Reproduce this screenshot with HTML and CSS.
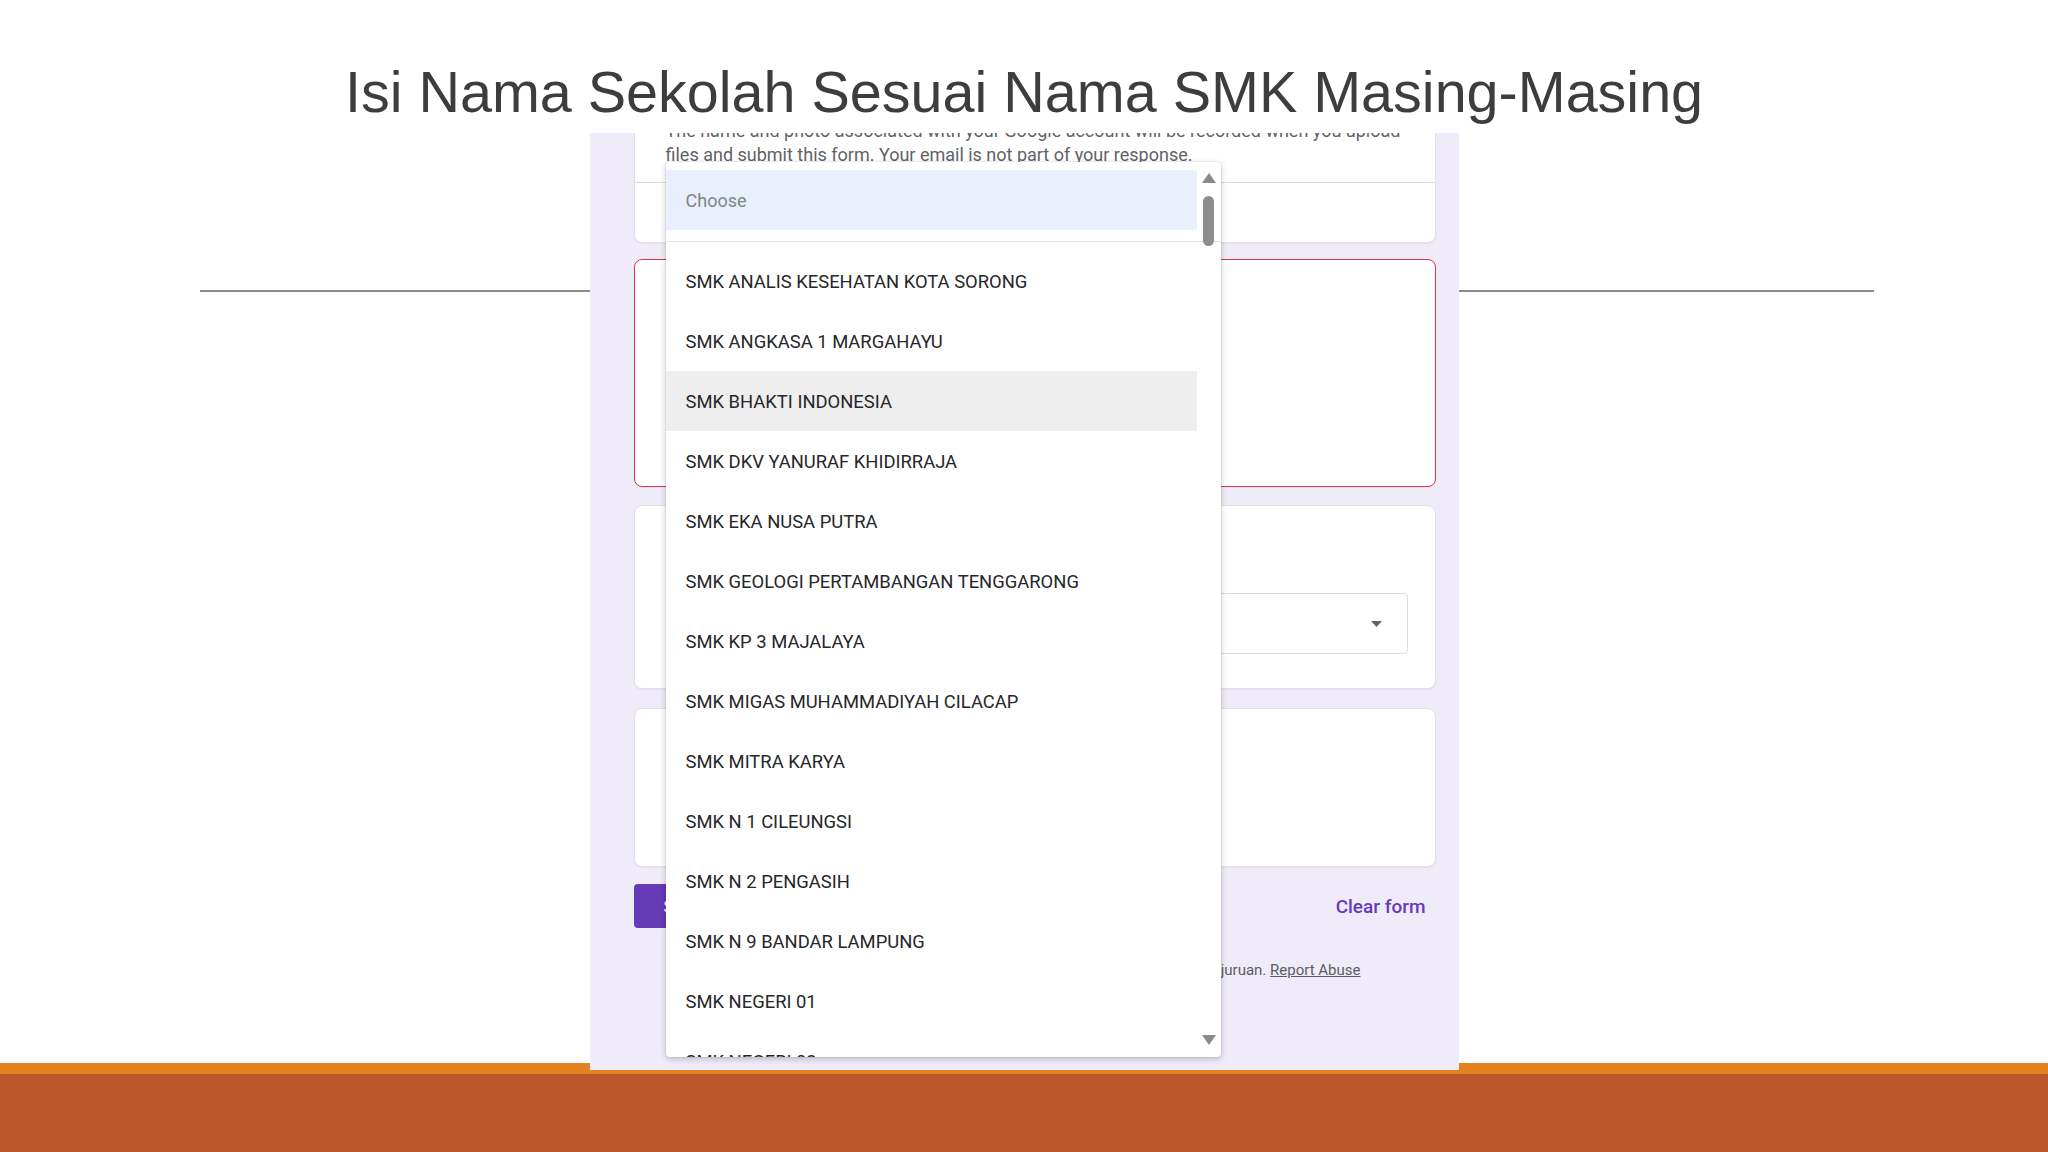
FILE: index.html
```html
<!DOCTYPE html>
<html lang="id">
<head>
<meta charset="utf-8">
<title>Isi Nama Sekolah Sesuai Nama SMK Masing-Masing</title>
<link rel="stylesheet" href="styles.css">
</head>
<body>
<div class="slide">
  <div class="rule"></div>
  <h1 class="title">Isi Nama Sekolah Sesuai Nama SMK Masing-Masing</h1>
  <div class="panel">
    <div class="cards">
      <div class="card card-intro">
        <p class="intro">The name and photo associated with your Google account will be recorded when you upload<br>files and submit this form. Your email is not part of your response.</p>
        <div class="divider"></div>
        <div class="required"></div>
      </div>
      <div class="card card-error"></div>
      <div class="card card-select">
        <div class="select">
          <svg class="select-arrow" width="11" height="6" viewBox="0 0 11 6"><path d="M0 0H11L5.5 6Z" fill="#5f6368"/></svg>
        </div>
      </div>
      <div class="card card-blank"></div>
      <div class="actions">
        <button class="submit">Submit</button>
        <span class="clear">Clear form</span>
      </div>
      <p class="footnote">This form was created inside of Sekolah Menengah Kejuruan. <a class="abuse">Report Abuse</a></p>
    </div>

    <div class="menu">
      <div class="menu-list">
        <div class="opt placeholder">Choose</div>
        <div class="menu-sep"></div>
        <div class="opt">SMK ANALIS KESEHATAN KOTA SORONG</div>
        <div class="opt">SMK ANGKASA 1 MARGAHAYU</div>
        <div class="opt hover">SMK BHAKTI INDONESIA</div>
        <div class="opt">SMK DKV YANURAF KHIDIRRAJA</div>
        <div class="opt">SMK EKA NUSA PUTRA</div>
        <div class="opt">SMK GEOLOGI PERTAMBANGAN TENGGARONG</div>
        <div class="opt">SMK KP 3 MAJALAYA</div>
        <div class="opt">SMK MIGAS MUHAMMADIYAH CILACAP</div>
        <div class="opt">SMK MITRA KARYA</div>
        <div class="opt">SMK N 1 CILEUNGSI</div>
        <div class="opt">SMK N 2 PENGASIH</div>
        <div class="opt">SMK N 9 BANDAR LAMPUNG</div>
        <div class="opt">SMK NEGERI 01</div>
        <div class="opt">SMK NEGERI 02</div>
      </div>
      <div class="scroll">
        <svg class="arrow arrow-up" width="14" height="10" viewBox="0 0 14 10"><path d="M7 0L14 10H0Z" fill="#8a8a8a"/></svg>
        <div class="thumb"></div>
        <div class="track"></div>
        <svg class="arrow arrow-down" width="14" height="10" viewBox="0 0 14 10"><path d="M0 0H14L7 10Z" fill="#8a8a8a"/></svg>
      </div>
    </div>
  </div>
  <div class="footer">
    <div class="stripe"></div>
    <div class="band"></div>
  </div>
</div>
</body>
</html>
```
FILE: styles.css
```css
* { box-sizing: border-box; }

html, body {
  margin: 0;
  padding: 0;
  background: #ffffff;
}

.slide {
  position: relative;
  width: 2048px;
  height: 1152px;
  overflow: hidden;
  display: flex;
  flex-direction: column;
  background: #ffffff;
}

.rule {
  position: absolute;
  left: 200px;
  top: 290px;
  width: 1674px;
  height: 2px;
  background: #8a8a8a;
  z-index: 0;
}

.title {
  margin: 57px 0 6px;
  height: 70px;
  line-height: 70px;
  font-family: "Liberation Sans", Arial, sans-serif;
  font-size: 57.5px;
  font-weight: normal;
  color: #3d3d3d;
  text-align: center;
  white-space: nowrap;
  position: relative;
  z-index: 1;
}

.panel {
  position: relative;
  z-index: 2;
  flex: none;
  width: 869px;
  height: 937px;
  margin: 0 auto;
  padding: 0 23px 0 44px;
  background: #f0ebf8;
  overflow: hidden;
  font-family: Roboto, "Liberation Sans", Arial, sans-serif;
}

.cards {
  margin-top: -30px;
  display: flex;
  flex-direction: column;
}

.card {
  background: #ffffff;
  border: 1px solid #e2dfe8;
  border-radius: 8px;
  box-shadow: 0 1px 2px rgba(60, 40, 100, 0.06);
}

.card-intro {
  height: 140px;
  padding-top: 15px;
}

.intro {
  margin: 0;
  padding: 0 31px;
  font-size: 18px;
  line-height: 24px;
  color: #5f6368;
  white-space: nowrap;
}

.divider {
  margin-top: 15px;
  height: 1px;
  background: #dadce0;
}

.card-error {
  margin-top: 16px;
  height: 228px;
  border-color: #d9394a;
}

.card-select {
  margin-top: 18px;
  height: 184px;
  padding: 87px 27px 0 31px;
}

.select {
  height: 61px;
  border: 1px solid #dadce0;
  border-radius: 4px;
  display: flex;
  align-items: center;
  justify-content: flex-end;
  padding-right: 25px;
}

.select-arrow {
  display: block;
}

.card-blank {
  margin-top: 19px;
  height: 159px;
}

.actions {
  margin-top: 17px;
  height: 44px;
  display: flex;
  align-items: center;
  justify-content: space-between;
}

.submit {
  height: 44px;
  padding: 0 30px;
  border: none;
  border-radius: 4px;
  background: #673ab7;
  color: #ffffff;
  font-family: Roboto, "Liberation Sans", Arial, sans-serif;
  font-size: 18px;
  font-weight: 500;
}

.clear {
  padding-right: 10px;
  font-size: 19px;
  font-weight: 500;
  color: #673ab7;
}

.footnote {
  margin: 32px 0 0;
  padding-right: 75px;
  line-height: 20px;
  font-size: 15px;
  color: #5a5e63;
  text-align: right;
  white-space: nowrap;
}

.abuse {
  color: #5a5e63;
  text-decoration: underline;
}

/* dropdown overlay */
.menu {
  position: absolute;
  left: 76px;
  top: 29px;
  width: 555px;
  height: 895px;
  display: flex;
  background: #ffffff;
  border-radius: 4px;
  box-shadow: 0 2px 6px rgba(0, 0, 0, 0.22), 0 0 2px rgba(0, 0, 0, 0.14);
  overflow: hidden;
  z-index: 3;
}

.menu-list {
  width: 531px;
  padding-top: 8px;
  flex: none;
}

.opt {
  height: 60px;
  display: flex;
  align-items: center;
  padding-left: 20px;
  font-family: Roboto, "Liberation Sans", Arial, sans-serif;
  font-size: 18.4px;
  color: #26272a;
  white-space: nowrap;
}

.opt.placeholder {
  background: #e9effb;
  color: #80868b;
  font-size: 18px;
}

.opt.hover {
  background: #eeeeee;
}

.menu-sep {
  height: 1px;
  margin: 11px -24px 9px 0;
  background: #e4e4e4;
}

.scroll {
  width: 24px;
  flex: none;
  display: flex;
  flex-direction: column;
  align-items: center;
  padding: 11px 0 12px;
}

.arrow {
  display: block;
  flex: none;
}

.thumb {
  margin-top: 13px;
  width: 11px;
  height: 50px;
  border-radius: 6px;
  background: #8d8d8d;
  flex: none;
}

.track {
  flex: 1;
}

.footer {
  flex: none;
  margin-top: -7px;
  position: relative;
  z-index: 1;
}

.stripe {
  height: 11px;
  background: #e3821e;
}

.band {
  height: 78px;
  background: #bc572b;
}
```
